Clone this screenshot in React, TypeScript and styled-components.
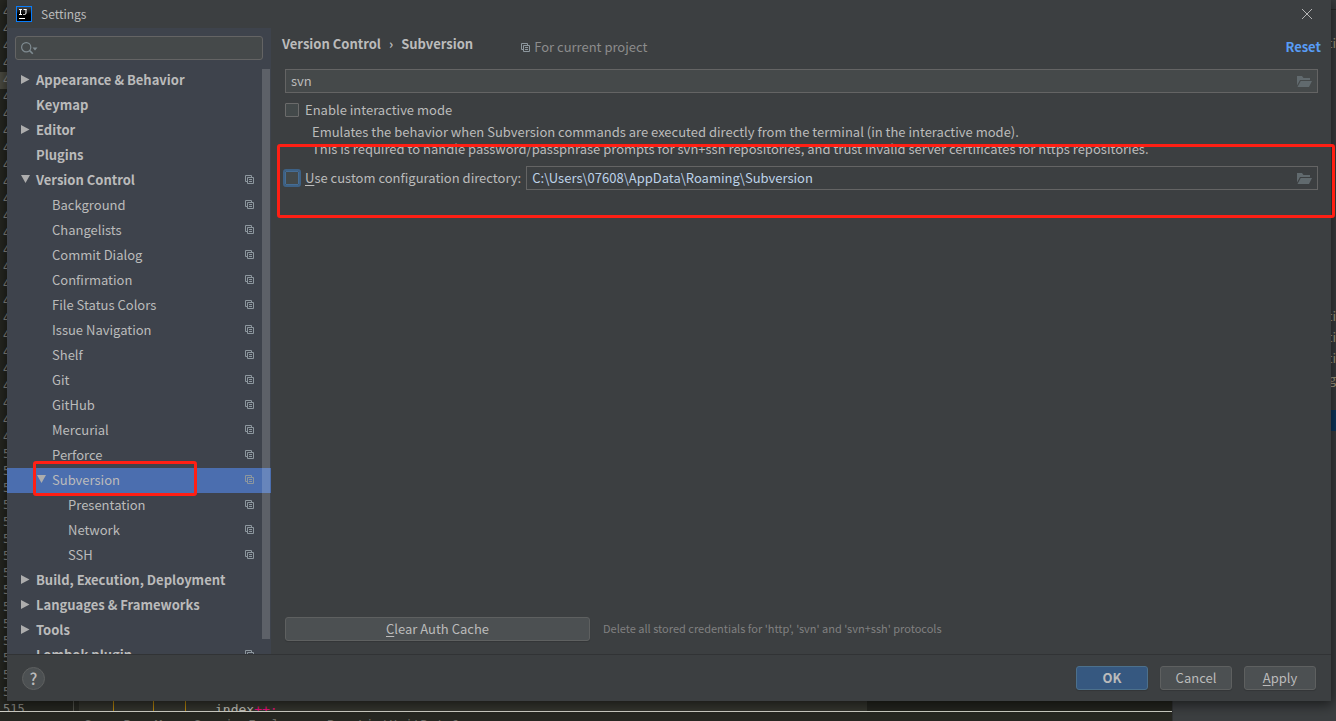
import React from "react";
import styled, { createGlobalStyle, css } from "styled-components";

const ui = `"Noto Sans CJK SC", "Noto Sans", sans-serif`;
const mono = `"DejaVu Sans Mono", "Liberation Mono", monospace`;

const GlobalStyle = createGlobalStyle`
  *, *::before, *::after { box-sizing: border-box; }
  body {
    margin: 0;
    background: #272822;
    color: #bbbbbb;
    font: 13px/18px ${ui};
  }
  button, input { font: inherit; color: inherit; }
`;

/* ---------- Desktop and the IDE behind the dialog ---------- */

const Desktop = styled.div`
  position: relative;
  min-height: 100vh;
  overflow: hidden;
`;

const Backdrop = styled.div`
  display: grid;
  grid-template-columns: minmax(0, 1fr) 164px;
  height: 100vh;
`;

const Editor = styled.div`
  display: flex;
  flex-direction: column;
  min-height: 0;
  font-family: ${mono};
`;

const Code = styled.div`
  flex: 1;
  min-height: 0;
  overflow: hidden;
  padding-top: 4px;
  border-bottom: 1px solid #d6d6cc;
`;

const CodeLine = styled.div<{ $current?: boolean }>`
  display: flex;
  height: 17px;
  line-height: 17px;
  background: ${(p) => (p.$current ? "#4e4e44" : "transparent")};
`;

const LineNumber = styled.span`
  width: 74px;
  padding-left: 3px;
  border-right: 1px solid #55564f;
  font-size: 12px;
  color: #90908a;
`;

const CodeText = styled.div`
  display: flex;
  flex: 1;
  margin-left: 5px;
  background: linear-gradient(to right, #35362f 788px, #24251f 788px);
  font-size: 13px;
  color: #c8c8c0;
`;

const Guide = styled.i<{ $width: number }>`
  width: ${(p) => p.$width}px;
  border-right: 1px solid #b8860b;
`;

const Statement = styled.span`
  padding-left: 29px;
`;

const Operator = styled.span`
  color: #f0107f;
`;

const Crumbs = styled.div`
  height: 9px;
  padding: 4px 0 0 84px;
  overflow: hidden;
  font-size: 13px;
  line-height: 17px;
  white-space: pre;
  color: #6a6a64;
`;

const SidePanel = styled.div`
  min-width: 0;
  border-left: 1px solid #313335;
  background: #3c3f41;
`;

const SideHeader = styled.div`
  height: 10px;
  margin-bottom: 22px;
  border-bottom: 1px solid #2b2b2b;
`;

const SideRow = styled.div<{ $selected?: boolean }>`
  height: 21px;
  line-height: 21px;
  text-align: right;
  color: #a9a28a;
  background: ${(p) => (p.$selected ? "#0d3a63" : "transparent")};
`;

/* ---------- Dialog ---------- */

const Dialog = styled.section`
  position: absolute;
  inset: 0 5px 20px 7px;
  display: flex;
  flex-direction: column;
  background: #3c3f41;
  box-shadow: 0 2px 12px 2px rgba(0, 0, 0, 0.55);
`;

const Body = styled.div`
  flex: 1;
  display: flex;
  min-height: 0;
`;

const TitleBar = styled.header`
  display: flex;
  align-items: center;
  gap: 9px;
  height: 28px;
  padding: 0 19px 0 9px;
`;

const Title = styled.h1`
  flex: 1;
  margin: 0;
  font-size: 12px;
  font-weight: 400;
`;

const IconButton = styled.button`
  display: flex;
  padding: 0;
  border: 0;
  background: none;
`;

const Sidebar = styled.nav`
  display: flex;
  flex-direction: column;
  flex: 0 0 264px;
  min-height: 0;
  background: #3e434c;
`;

const SearchBox = styled.label`
  display: flex;
  align-items: center;
  height: 24px;
  margin: 8px;
  padding: 0 5px;
  border: 1px solid #646464;
  border-radius: 3px;
  background: #45494a;
`;

const SearchInput = styled.input`
  flex: 1;
  min-width: 0;
  padding: 0 4px;
  border: 0;
  outline: 0;
  background: none;
`;

const TreeViewport = styled.div`
  position: relative;
  flex: 1;
  min-height: 0;
  overflow: hidden;
`;

const Tree = styled.ul`
  margin: 0;
  padding: 0;
  list-style: none;
`;

const TreeRow = styled.li<{ $depth: number; $bold?: boolean; $selected?: boolean }>`
  position: relative;
  display: flex;
  align-items: center;
  height: 25px;
  padding: 0 17px 2px ${(p) => 14 + p.$depth * 16}px;
  font-weight: ${(p) => (p.$bold ? 700 : 400)};
  background: ${(p) => (p.$selected ? "#4b6eaf" : "transparent")};
`;

const TreeArrow = styled.span`
  display: flex;
  width: 15px;
`;

const TreeLabel = styled.span`
  flex: 1;
  white-space: nowrap;
`;

const ScrollThumb = styled.div`
  position: absolute;
  top: 1px;
  right: 1px;
  bottom: 15px;
  width: 8px;
  background: rgba(255, 255, 255, 0.16);
`;

const Highlight = styled.div<{ $area: "row" | "section" }>`
  position: absolute;
  border: 3px solid #ff1f14;
  border-radius: 3px;
  pointer-events: none;
  ${(p) =>
    p.$area === "row"
      ? css`
          inset: -7px auto -3px 26px;
          width: 164px;
          z-index: 1;
        `
      : css`
          inset: -22px -17px -28px -8px;
        `}
`;

const Main = styled.main`
  flex: 1;
  display: flex;
  flex-direction: column;
  min-width: 0;
  padding: 0 13px 13px 14px;
`;

const PageHeader = styled.div`
  display: flex;
  align-items: center;
  height: 32px;
  margin: 0 -3px 9px -3px;
`;

const Breadcrumb = styled.div`
  display: flex;
  gap: 8px;
  font-weight: 700;
`;

const Scope = styled.div`
  display: flex;
  align-items: center;
  gap: 4px;
  flex: 1;
  padding: 6px 0 0 48px;
  color: #8c8c8c;
`;

const ResetLink = styled.a`
  padding-top: 6px;
  font-weight: 700;
  color: #589df6;
  text-decoration: none;
`;

const PathField = styled.div<{ $plain?: boolean }>`
  display: flex;
  align-items: center;
  flex: 1;
  height: 24px;
  min-height: 24px;
  padding: 0 5px;
  border: 1px solid #646464;
  background: ${(p) => (p.$plain ? "transparent" : "#45494a")};
  color: ${(p) => (p.$plain ? "#bcd2e8" : "#bbbbbb")};
`;

const PathInput = styled.input`
  flex: 1;
  min-width: 0;
  height: 22px;
  padding: 0 0 2px;
  border: 0;
  outline: 0;
  background: none;
`;

const FieldRow = styled.div`
  display: flex;
`;

const Check = styled.input`
  appearance: none;
  flex: none;
  width: 14px;
  height: 14px;
  margin: 0 6px 0 0;
  border: 1px solid #6b6b6b;
  border-radius: 1px;
  background: #43494a;
  &[data-focus="true"] {
    border-color: #466d94;
    outline: 2px solid #3d6185;
  }
`;

const CheckLabel = styled.label`
  display: flex;
  align-items: center;
  height: 24px;
  white-space: pre;
`;

const DirectoryLabel = styled(CheckLabel)`
  flex: 0 0 236px;
`;

const InteractiveOption = styled.div`
  padding: 5px 0 1px;
`;

const Hint = styled.p`
  margin: 0 0 0 27px;
  line-height: 17px;
`;

const ConfigSection = styled.div`
  position: relative;
  display: flex;
  align-items: center;
  gap: 5px;
  margin-top: 9px;
`;

const Mnemonic = styled.u`
  text-underline-offset: 2px;
`;

const Spacer = styled.div`
  flex: 1;
`;

const AuthRow = styled.div`
  display: flex;
  align-items: center;
  gap: 13px;
`;

const AuthNote = styled.span`
  padding-bottom: 2px;
  font-size: 11px;
  color: #808080;
`;

const Button = styled.button<{ $wide?: boolean; $primary?: boolean }>`
  width: ${(p) => (p.$wide ? 305 : 72)}px;
  height: 24px;
  padding: 0;
  border: 1px solid ${(p) => (p.$primary ? "#4c708c" : "#5e6060")};
  border-radius: 3px;
  background: ${(p) => (p.$primary ? "#365880" : "#4c5052")};
  box-shadow: 0 1px 1px rgba(0, 0, 0, 0.15);
  font-weight: ${(p) => (p.$primary ? 700 : 400)};
  line-height: 20px;
`;

const Footer = styled.footer`
  display: flex;
  align-items: center;
  gap: 12px;
  height: 47px;
  padding: 0 15px;
  border-top: 1px solid #313335;
`;

const HelpButton = styled.button`
  width: 23px;
  height: 23px;
  margin-right: auto;
  padding: 0;
  border: 1px solid #5e6060;
  border-radius: 50%;
  background: #4c5052;
  font-size: 16px;
  font-weight: 500;
  line-height: 20px;
`;

/* ---------- Icons ---------- */

const IdeaLogo = () => (
  <svg width="16" height="16" viewBox="0 0 16 16" aria-hidden="true">
    <defs>
      <linearGradient id="idea" x1="0" y1="0" x2="0" y2="1">
        <stop offset="0" stopColor="#4a4a4a" />
        <stop offset=".5" stopColor="#000" />
      </linearGradient>
    </defs>
    <rect x=".5" y=".5" width="15" height="15" fill="url(#idea)" stroke="#087cfa" />
    <path d="M3 3.5h3M4.5 3.5v5M3 8.5h3M7.5 3.5h3M10 3v4q0 1.5-1.5 1.5H7.3" stroke="#fff" fill="none" />
    <path d="M3 12.5h6" stroke="#fff" />
  </svg>
);

const CloseIcon = () => (
  <svg width="10" height="10" viewBox="0 0 10 10" aria-hidden="true">
    <path d="M0 0L10 10M10 0L0 10" stroke="#b4b4b4" fill="none" />
  </svg>
);

const SearchIcon = () => (
  <svg width="17" height="13" viewBox="0 0 17 13" aria-hidden="true">
    <circle cx="5.2" cy="5.2" r="4.6" fill="none" stroke="#7f8b91" strokeWidth="1.2" />
    <path d="M8.4 8.4L11.8 11.8" stroke="#7f8b91" strokeWidth="1.6" />
    <path d="M11.5 5.5h5l-2.5 3z" fill="#7f8b91" />
  </svg>
);

const ScopeIcon = () => (
  <svg width="9" height="9" viewBox="0 0 9 9" fill="none" stroke="#8d979e" aria-hidden="true">
    <path d="M2 6.5H.5V.5H6.5V2M2.5 2.5h6v6h-6zM4 4.5h3M4 6.5h3" />
  </svg>
);

const FolderIcon = () => (
  <svg width="15" height="11" viewBox="0 0 15 11" fill="#616a6e" aria-hidden="true">
    <path d="M0 0h5l1.500 2H13v2H3L0 9.500z" />
    <path d="M3.700 5H15l-3 6H.5z" />
  </svg>
);

const Arrow = ({ open }: { open: boolean }) => (
  <svg width="9" height="9" viewBox="0 0 9 9" fill="#adadad" aria-hidden="true">
    <path d={open ? "M0 0h9L4.500 8z" : "M0 0v9L8.500 4.500z"} />
  </svg>
);

/* ---------- Content ---------- */

type Node = { label: string; depth: number; arrow?: "open" | "closed"; scoped?: boolean };

const child = (label: string, depth = 1): Node => ({ label, depth, scoped: true });

const nodes: Node[] = [
  { label: "Appearance & Behavior", depth: 0, arrow: "closed" },
  { label: "Keymap", depth: 0 },
  { label: "Editor", depth: 0, arrow: "closed" },
  { label: "Plugins", depth: 0 },
  { label: "Version Control", depth: 0, arrow: "open", scoped: true },
  child("Background"),
  child("Changelists"),
  child("Commit Dialog"),
  child("Confirmation"),
  child("File Status Colors"),
  child("Issue Navigation"),
  child("Shelf"),
  child("Git"),
  child("GitHub"),
  child("Mercurial"),
  child("Perforce"),
  { ...child("Subversion"), arrow: "open" },
  child("Presentation", 2),
  child("Network", 2),
  child("SSH", 2),
  { label: "Build, Execution, Deployment", depth: 0, arrow: "closed" },
  { label: "Languages & Frameworks", depth: 0, arrow: "closed" },
  { label: "Tools", depth: 0, arrow: "closed" },
  { label: "Lombok plugin", depth: 0, scoped: true },
];

const lines = Array.from({ length: 42 }, (_, i) => 474 + i);
const sideRows: Record<number, string> = { 0: "ti", 13: "ti", 14: "ti", 15: "ti", 16: "g" };

const IdeBackdrop = () => (
  <Backdrop>
    <Editor>
      <Code>
        {lines.map((n) => (
          <CodeLine key={n} $current={n === 478}>
            <LineNumber>{n}</LineNumber>
            {n === 515 && (
              <CodeText>
                <Guide $width={35} />
                <Guide $width={40} />
                <Guide $width={32} />
                <Statement>
                  index<Operator>++;</Operator>
                </Statement>
              </CodeText>
            )}
          </CodeLine>
        ))}
      </Code>
      <Crumbs>{"SpareParaMergeServiceImpl      ParaListUnitData&"}</Crumbs>
    </Editor>
    <SidePanel>
      <SideHeader />
      {Array.from({ length: 19 }, (_, i) => (
        <SideRow key={i} $selected={i === 18}>
          {sideRows[i]}
        </SideRow>
      ))}
    </SidePanel>
  </Backdrop>
);

const SettingsTree = () => (
  <Sidebar aria-label="Settings">
    <SearchBox>
      <SearchIcon />
      <SearchInput type="text" aria-label="Search settings" />
    </SearchBox>
    <TreeViewport>
      <Tree>
        {nodes.map((n) => {
          const selected = n.label === "Subversion";
          return (
            <TreeRow key={n.label} $depth={n.depth} $bold={n.depth === 0} $selected={selected}>
              <TreeArrow>{n.arrow && <Arrow open={n.arrow === "open"} />}</TreeArrow>
              <TreeLabel>{n.label}</TreeLabel>
              {n.scoped && <ScopeIcon />}
              {selected && <Highlight $area="row" />}
            </TreeRow>
          );
        })}
      </Tree>
      <ScrollThumb />
    </TreeViewport>
  </Sidebar>
);

export default function App() {
  return (
    <>
      <GlobalStyle />
      <Desktop>
        <IdeBackdrop />
        <Dialog role="dialog" aria-label="Settings">
          <TitleBar>
            <IdeaLogo />
            <Title>Settings</Title>
            <IconButton aria-label="Close">
              <CloseIcon />
            </IconButton>
          </TitleBar>
          <Body>
            <SettingsTree />
            <Main>
              <PageHeader>
                <Breadcrumb>
                  <span>Version Control</span>
                  <span>›</span>
                  <span>Subversion</span>
                </Breadcrumb>
                <Scope>
                  <ScopeIcon />
                  For current project
                </Scope>
                <ResetLink href="#reset">Reset</ResetLink>
              </PageHeader>
              <FieldRow>
                <PathField>
                  <PathInput type="text" aria-label="Path to Subversion executable" defaultValue="svn" />
                  <FolderIcon />
                </PathField>
              </FieldRow>
              <InteractiveOption>
                <CheckLabel>
                  <Check type="checkbox" />
                  Enable interactive mode
                </CheckLabel>
              </InteractiveOption>
              <Hint>
                Emulates the behavior when Subversion commands are executed directly from the terminal (in the
                interactive mode).
                <br />
                This is required to handle password/passphrase prompts for svn+ssh repositories, and trust invalid
                server certificates for https repositories.
              </Hint>
              <ConfigSection>
                <DirectoryLabel>
                  <Check type="checkbox" data-focus="true" />
                  <Mnemonic>U</Mnemonic>se custom configuration directory:
                </DirectoryLabel>
                <PathField $plain>
                  <PathInput
                    type="text"
                    aria-label="Configuration directory"
                    defaultValue="C:\Users\07608\AppData\Roaming\Subversion"
                  />
                  <FolderIcon />
                </PathField>
                <Highlight $area="section" />
              </ConfigSection>
              <Spacer />
              <AuthRow>
                <Button $wide>
                  <Mnemonic>C</Mnemonic>lear Auth Cache
                </Button>
                <AuthNote>Delete all stored credentials for 'http', 'svn' and 'svn+ssh' protocols</AuthNote>
              </AuthRow>
            </Main>
          </Body>
          <Footer>
            <HelpButton aria-label="Help">?</HelpButton>
            <Button $primary>OK</Button>
            <Button>Cancel</Button>
            <Button>
              <Mnemonic>A</Mnemonic>pply
            </Button>
          </Footer>
        </Dialog>
      </Desktop>
    </>
  );
}
